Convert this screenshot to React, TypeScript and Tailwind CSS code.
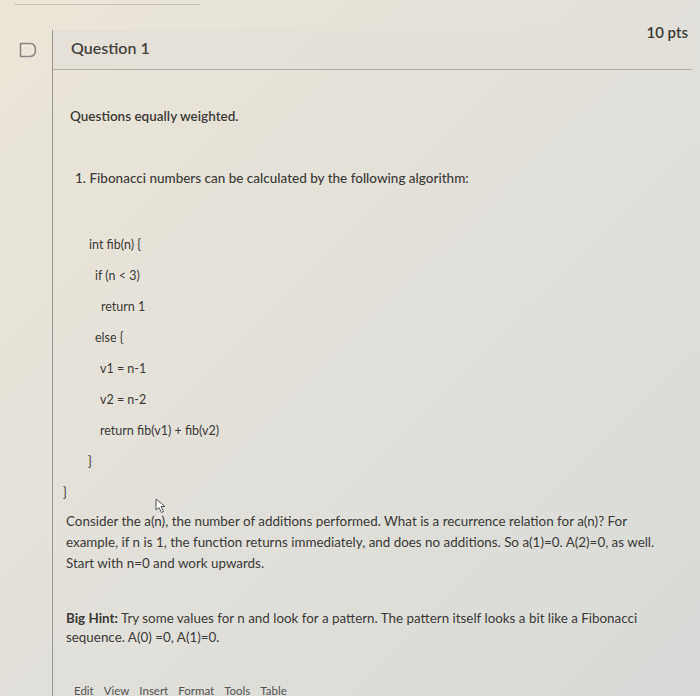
import React from "react";

const codeLines: { text: string; indent: string }[] = [
  { text: "int fib(n) {", indent: "pl-[23px]" },
  { text: "if (n < 3)", indent: "pl-[29px]" },
  { text: "return 1", indent: "pl-[35px]" },
  { text: "else {", indent: "pl-[29px]" },
  { text: "v1 = n-1", indent: "pl-[34px]" },
  { text: "v2 = n-2", indent: "pl-[34px]" },
  { text: "return fib(v1) + fib(v2)", indent: "pl-[34px]" },
  { text: "}", indent: "pl-[22px]" },
  { text: "}", indent: "-ml-[3px]" },
];

const FlagIcon = () => (
  <svg width="18" height="16" viewBox="0 0 18 16" fill="none" className="text-[#8a8884]">
    <path d="M1.5 1.5 H11 Q16.5 1.5 16.5 8 Q16.5 14.5 11 14.5 H1.5 Z" stroke="currentColor" strokeWidth="1.6" strokeLinejoin="round" />
  </svg>
);

export default function App() {
  return (
    <div
      className="w-[700px] h-[696px] overflow-hidden bg-linear-to-br from-[#ece6d8] via-[#e2e0da] to-[#d8dbd8] text-[#3b3a37] pt-[4px]"
      style={{ fontFamily: "Lato, 'Open Sans', sans-serif" }}
    >
      <div className="ml-[14px] w-[186px] border-t border-[#c9c5bc]" />
      <div className="flex mt-[25px]">
        <div className="w-[52px] flex justify-center pt-[12px] pl-[4px]">
          <FlagIcon />
        </div>
        <div className="flex-1 mr-[8px] border-l border-[#9a9893]">
          <div className="flex justify-between items-start h-[40px] bg-[#e3e0d9]/70 border-b border-[#b3b0a9] pl-[18px] pr-[4px]">
            <span className="text-[16px] font-semibold pt-[6px] text-[#45433f]">Question 1</span>
            <span className="text-[15px] font-semibold -mt-[9px] text-[#3a3936]">10 pts</span>
          </div>
          <div className="pl-[17px] pt-[36px] text-[13.5px]">
            <p className="font-semibold">Questions equally weighted.</p>
            <p className="mt-[42px] pl-[5px] font-medium">1. Fibonacci numbers can be calculated by the following algorithm:</p>
            <div className="mt-[47px] flex flex-col gap-[13px] text-[12.5px] -ml-[17px] pl-[13px]">
              {codeLines.map((l, i) => (
                <div key={i} className={`${l.indent} leading-[18px]`}>
                  {l.text}
                </div>
              ))}
            </div>
            <div className="-ml-[4px] mt-[9px] text-[13.4px] leading-[21px] pr-[24px] relative">
              <svg
                width="12"
                height="16"
                viewBox="0 0 12 16"
                className="absolute left-[89px] -top-[13px]"
              >
                <path d="M1 1 L1 12 L4 9.5 L6.5 14.5 L8.5 13.5 L6 8.5 L10 8.5 Z" fill="#fff" stroke="#555" strokeWidth="1" />
              </svg>
              <p>
                Consider the a(n), the number of additions performed. What is a recurrence relation for a(n)? For
                example, if n is 1, the function returns immediately, and does no additions. So a(1)=0. A(2)=0, as well.
                Start with n=0 and work upwards.
              </p>
              <p className="mt-[35px] leading-[19px]">
                <span className="font-bold">Big Hint:</span> Try some values for n and look for a pattern. The pattern
                itself looks a bit like a Fibonacci sequence. A(0) =0, A(1)=0.
              </p>
              <div className="mt-[33px] ml-[8px] flex gap-[10px] text-[11.5px] text-[#555]">
                <span>Edit</span>
                <span>View</span>
                <span>Insert</span>
                <span>Format</span>
                <span>Tools</span>
                <span>Table</span>
              </div>
            </div>
          </div>
        </div>
      </div>
    </div>
  );
}
